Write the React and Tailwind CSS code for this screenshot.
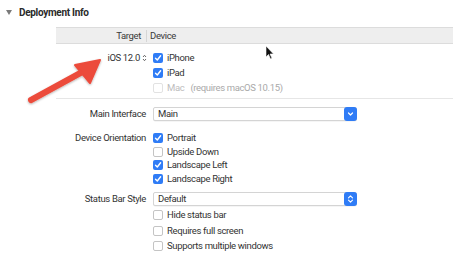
import React from "react";

const Check = ({ checked, disabled }) => (
  <div
    className={
      "w-[10px] h-[10px] rounded-[2px] flex items-center justify-center shrink-0 " +
      (checked
        ? "bg-[#2f7cf6]"
        : disabled
        ? "bg-white border border-[#e2e2e2]"
        : "bg-white border border-[#c4c4c4]")
    }
  >
    {checked && (
      <svg width="8" height="8" viewBox="0 0 8 8">
        <path d="M1.5 4.2 L3.3 6 L6.6 1.8" fill="none" stroke="white" strokeWidth="1.4" strokeLinecap="round" strokeLinejoin="round" />
      </svg>
    )}
  </div>
);

const Row = ({ label, h, children, className = "" }) => (
  <div className={"flex items-center " + h + " " + className}>
    <div className="w-[146px] text-right pr-0 shrink-0">{label}</div>
    <div className="pl-[7px] flex items-center gap-[4px]">{children}</div>
  </div>
);

const CheckRow = ({ label, h, checked, text, disabled, extra }) => (
  <Row label={label} h={h}>
    <Check checked={checked} disabled={disabled} />
    <span className={disabled ? "text-[#bdbdbd]" : ""}>{text}</span>
    {extra && <span className="text-[#a9a9a9] ml-[2px]">{extra}</span>}
  </Row>
);

const Popup = ({ value, updown }) => (
  <div className="w-[204px] h-[14px] border border-[#d4d4d4] bg-white rounded-[2px] flex items-center justify-between pl-[4px] shadow-[0_0.5px_0_rgba(0,0,0,0.08)]">
    <span>{value}</span>
    <div className="w-[13px] h-[14px] -mr-px bg-[#2f7cf6] rounded-[3px] flex items-center justify-center">
      {updown ? (
        <svg width="7" height="10" viewBox="0 0 7 10">
          <path d="M1.5 3.8 L3.5 1.8 L5.5 3.8 M1.5 6.2 L3.5 8.2 L5.5 6.2" fill="none" stroke="white" strokeWidth="1.1" strokeLinecap="round" strokeLinejoin="round" />
        </svg>
      ) : (
        <svg width="7" height="6" viewBox="0 0 7 6">
          <path d="M1.5 2 L3.5 4 L5.5 2" fill="none" stroke="white" strokeWidth="1.2" strokeLinecap="round" strokeLinejoin="round" />
        </svg>
      )}
    </div>
  </div>
);

export default function App() {
  return (
    <div
      className="w-[474px] h-[260px] bg-white relative overflow-hidden text-[9.5px] text-[#333] leading-none tracking-[-0.35px]"
      style={{ fontFamily: "Roboto, 'Liberation Sans', Arial, sans-serif" }}
    >
      <div className="flex items-center h-[24px] pl-[6px] pt-[1px]">
        <svg width="6" height="5" viewBox="0 0 6 5" className="mr-[7px]">
          <path d="M0 0 L6 0 L3 5 Z" fill="#7a7a7a" />
        </svg>
        <span className="font-bold text-[#2a2a2a] text-[10px] tracking-[-0.3px]">Deployment Info</span>
      </div>

      <div className="ml-[56px] mt-[3px] w-[397px] h-[17px] bg-[#eeeeee] border-t border-b border-[#dcdcdc] flex items-center">
        <div className="w-[90px] text-right pr-[5px] text-[#3a3a3a]">Target</div>
        <div className="w-px h-[12px] bg-[#d6d6d6]" />
        <div className="pl-[3px] text-[#3a3a3a]">Device</div>
      </div>

      <div className="mt-[6px]">
        <Row
          h="h-[15px]"
          label={
            <span className="inline-flex items-center justify-end gap-[2px] mr-[-1px]">
              <span>iOS 12.0</span>
              <svg width="5" height="8" viewBox="0 0 5 8">
                <path d="M1 3 L2.5 1.3 L4 3 M1 5 L2.5 6.7 L4 5" fill="none" stroke="#555" strokeWidth="0.9" />
              </svg>
            </span>
          }
        >
          <Check checked />
          <span>iPhone</span>
        </Row>
        <CheckRow h="h-[15px]" checked text="iPad" />
        <CheckRow h="h-[15px]" disabled text="Mac" extra="(requires macOS 10.15)" />
      </div>

      <div className="ml-[56px] mt-[3px] w-[397px] h-px bg-[#e6e6e6]" />

      <Row h="h-[14px]" className="mt-[8px]" label="Main Interface">
        <Popup value="Main" />
      </Row>

      <div className="mt-[10px]">
        <CheckRow h="h-[14px]" label="Device Orientation" checked text="Portrait" />
        <CheckRow h="h-[13px]" text="Upside Down" />
        <CheckRow h="h-[14px]" checked text="Landscape Left" />
        <CheckRow h="h-[14px]" checked text="Landscape Right" />
      </div>

      <Row h="h-[14px]" className="mt-[6px]" label="Status Bar Style">
        <Popup value="Default" updown />
      </Row>

      <div className="mt-[1px]">
        <CheckRow h="h-[16px]" text="Hide status bar" />
        <CheckRow h="h-[15px]" text="Requires full screen" />
        <CheckRow h="h-[16px]" text="Supports multiple windows" />
      </div>

      <svg className="absolute left-0 top-0 pointer-events-none" width="474" height="260" viewBox="0 0 474 260">
        <defs>
          <filter id="sh" x="-20%" y="-20%" width="140%" height="140%">
            <feDropShadow dx="0" dy="1" stdDeviation="1" floodColor="#000" floodOpacity="0.3" />
          </filter>
        </defs>
        <g filter="url(#sh)">
          <line x1="31" y1="100" x2="84" y2="71" stroke="#ec4b3b" strokeWidth="6" strokeLinecap="round" />
          <path d="M100 60 L75 65 L90 83 Z" fill="#ec4b3b" stroke="#ec4b3b" strokeWidth="2" strokeLinejoin="round" />
        </g>
        <path d="M266 46 L266 57 L268.5 54.5 L270.5 59 L272 58.3 L270 54 L273.5 54 Z" fill="#111" stroke="white" strokeWidth="0.6" />
      </svg>
    </div>
  );
}
